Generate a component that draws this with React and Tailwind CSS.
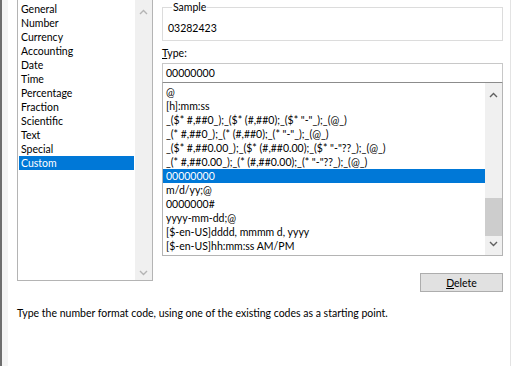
import React from "react";

const categories = [
  "General",
  "Number",
  "Currency",
  "Accounting",
  "Date",
  "Time",
  "Percentage",
  "Fraction",
  "Scientific",
  "Text",
  "Special",
  "Custom",
];

const formats = [
  "@",
  "[h]:mm:ss",
  '_($* #,##0_);_($* (#,##0);_($* "-"_);_(@_)',
  '_(* #,##0_);_(* (#,##0);_(* "-"_);_(@_)',
  '_($* #,##0.00_);_($* (#,##0.00);_($* "-"??_);_(@_)',
  '_(* #,##0.00_);_(* (#,##0.00);_(* "-"??_);_(@_)',
  "00000000",
  "m/d/yy;@",
  "0000000#",
  "yyyy-mm-dd;@",
  "[$-en-US]dddd, mmmm d, yyyy",
  "[$-en-US]hh:mm:ss AM/PM",
];

const Chevron = ({ up, color }) => (
  <svg width="9" height="6" viewBox="0 0 9 6">
    <polyline
      points={up ? "1,5 4.5,1.5 8,5" : "1,1 4.5,4.5 8,1"}
      fill="none"
      stroke={color}
      strokeWidth="1.4"
    />
  </svg>
);

const App = () => {
  return (
    <div
      className="w-[511px] h-[366px] bg-white flex overflow-hidden text-[10.5px] leading-[14px] text-black"
      style={{ fontFamily: 'Lato, "Noto Sans", sans-serif' }}
    >
      {/* window edge */}
      <div className="w-[2px] h-full bg-[#6e6e6e]" />
      <div className="w-[6px] h-full bg-[#f4f4f4]" />

      <div className="flex-1 flex flex-col pl-[9px]">
        <div className="flex items-start">
          {/* Category list */}
          <div className="w-[136px] h-[282px] mt-[-1px] border border-[#b4b4b4] flex bg-white">
            <div className="flex-1 pt-[2px] pl-px">
              {categories.map((c) => (
                <div
                  key={c}
                  className={
                    c === "Custom"
                      ? "h-[14px] w-[115px] pl-[2px] bg-[#0078d7] text-white"
                      : "h-[14px] pl-[2px]"
                  }
                >
                  {c}
                </div>
              ))}
            </div>
            <div className="w-[17px] bg-[#f0f0f0] flex flex-col justify-between items-center pt-[9px] pb-[4px]">
              <Chevron up color="#b4b4b4" />
              <Chevron color="#b4b4b4" />
            </div>
          </div>

          {/* Right column */}
          <div className="ml-[9px] w-[341px] flex flex-col">
            <fieldset className="border border-[#dcdcdc] h-[41px] pl-[5px]">
              <legend className="ml-[4px] px-px">Sample</legend>
              <div className="pt-[7px]">03282423</div>
            </fieldset>

            <div className="mt-[5px] h-[14px]">
              <span className="underline">T</span>ype:
            </div>

            <div className="mt-[3px] h-[20px] border border-[#c8c8c8] border-b-[#8c8c8c] pl-[3px] flex items-center">
              00000000
            </div>

            <div className="h-[173px] border border-t-0 border-[#b4b4b4] flex overflow-hidden">
              <div className="flex-1 pt-[2px]">
                {formats.map((f) => (
                  <div
                    key={f}
                    className={
                      f === "00000000"
                        ? "h-[14px] pl-[3px] whitespace-nowrap bg-[#0078d7] text-white"
                        : "h-[14px] pl-[3px] whitespace-nowrap"
                    }
                  >
                    {f}
                  </div>
                ))}
              </div>
              <div className="w-[17px] bg-[#f0f0f0] flex flex-col items-center pt-[9px] pb-[6px]">
                <Chevron up color="#606060" />
                <div className="mt-[100px] w-[17px] h-[38px] bg-[#cdcdcd]" />
                <div className="mt-[5px]">
                  <Chevron color="#606060" />
                </div>
              </div>
            </div>

            <div className="flex justify-end mt-[17px]">
              <button className="w-[83px] h-[19px] bg-[#e1e1e1] border border-[#adadad] leading-[14px]">
                <span className="underline">D</span>elete
              </button>
            </div>
          </div>
        </div>

        <div className="mt-[14px] h-[14px] whitespace-nowrap">
          Type the number format code, using one of the existing codes as a
          starting point.
        </div>
      </div>

      <div className="w-px h-full bg-[#e3e3e3]" />
    </div>
  );
};

export default App;
